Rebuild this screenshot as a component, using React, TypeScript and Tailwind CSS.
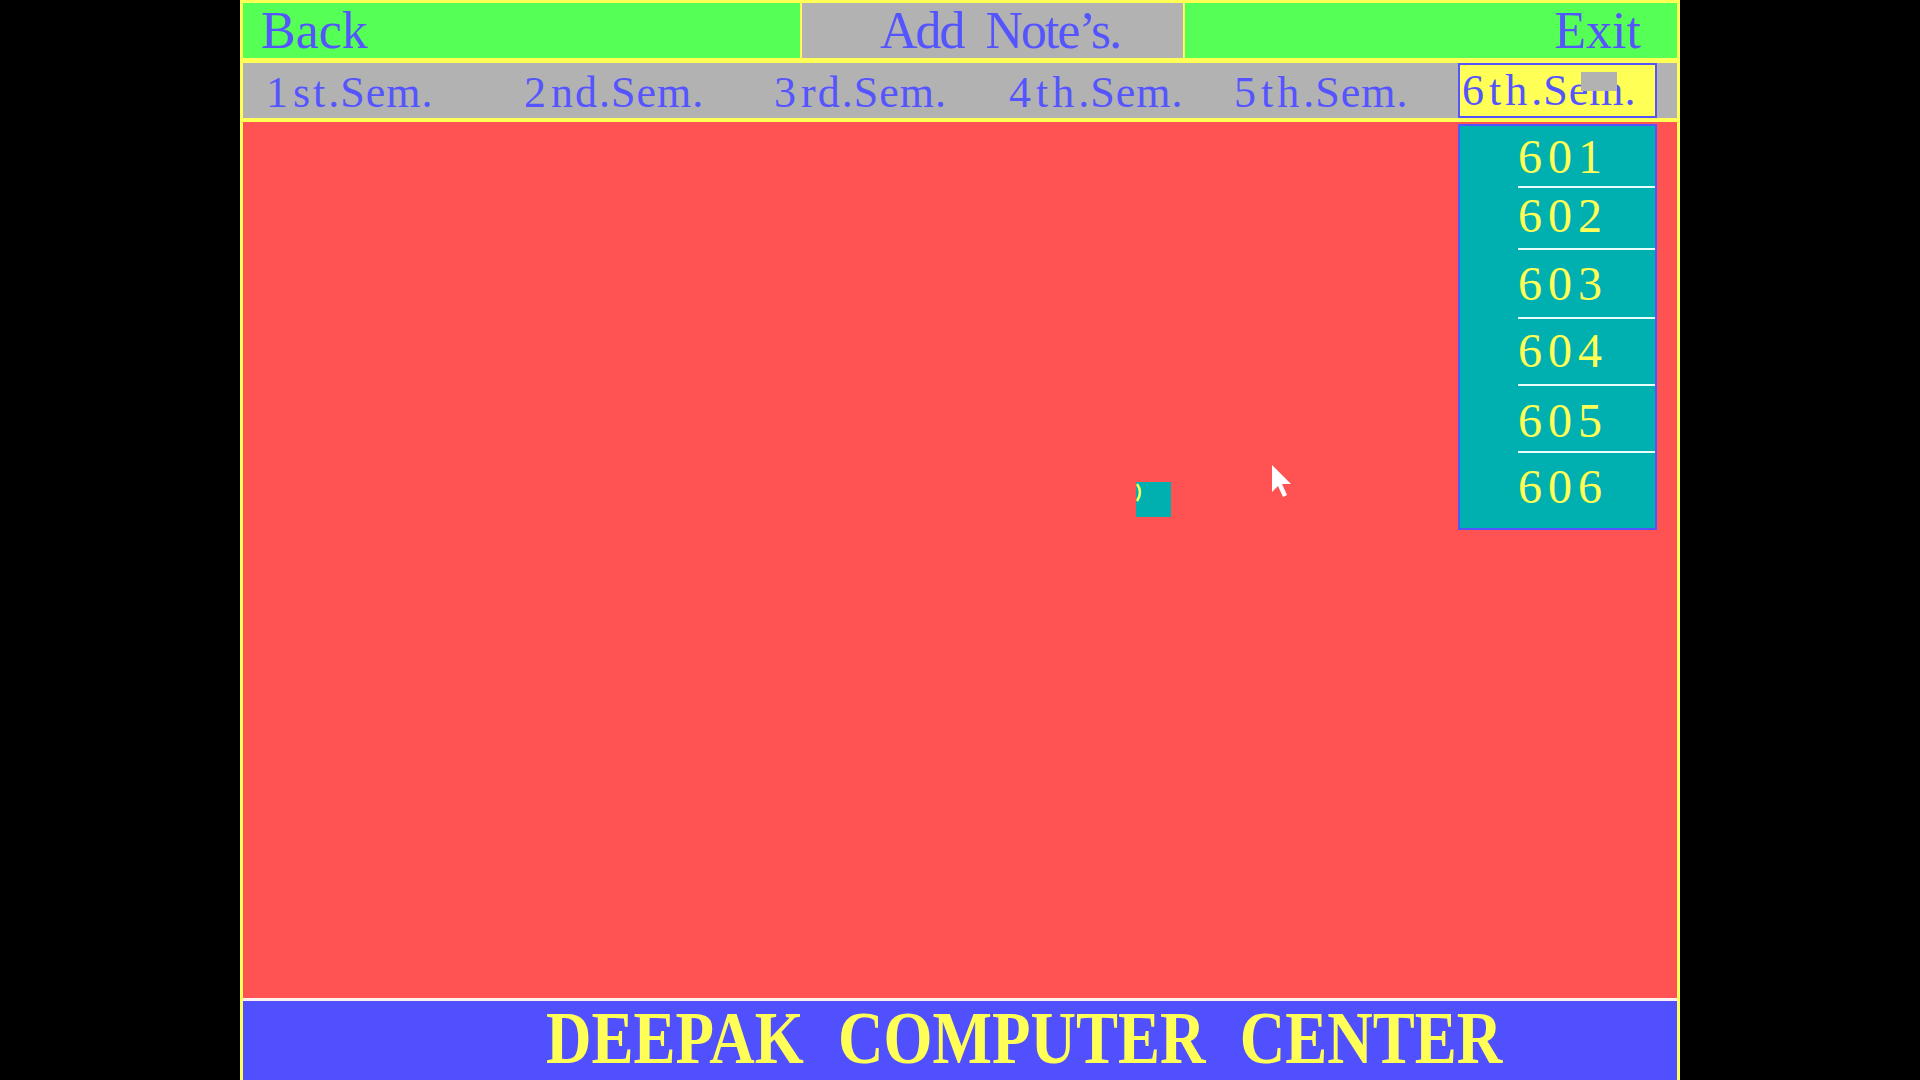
import React from "react";

const serif = { fontFamily: '"Liberation Serif", "Times New Roman", serif' };

const tabs = [
  { n: "1", a: "st", cls: "w-[258px]", acls: "tracking-[3px]" },
  { n: "2", a: "nd", cls: "w-[250px]", acls: "tracking-[2px]" },
  { n: "3", a: "rd", cls: "w-[235px]", acls: "tracking-[2px]" },
  { n: "4", a: "th", cls: "w-[225px]", acls: "tracking-[4px]" },
  { n: "5", a: "th", cls: "w-[224px]", acls: "tracking-[4px]" },
];

const items = [
  { label: "601", cls: "h-[62px] pt-[7px] border-b-2" },
  { label: "602", cls: "h-[62px] pt-[4px] border-b-2" },
  { label: "603", cls: "h-[69px] pt-[10px] border-b-2" },
  { label: "604", cls: "h-[67px] pt-[8px] border-b-2" },
  { label: "605", cls: "h-[67px] pt-[11px] border-b-2" },
  { label: "606", cls: "h-[75px] pt-[10px]" },
];

export default function App() {
  return (
    <div className="w-[1920px] h-[1080px] bg-black flex justify-center overflow-hidden" style={serif}>
      <div className="relative w-[1440px] h-[1080px] bg-[#ffff55] px-[3px] pt-[3px] flex flex-col">
        {/* top bar */}
        <div className="h-[55px] flex gap-[2px] text-[52px] leading-[55px] text-[#5555ff]">
          <div className="w-[557px] bg-[#55ff55] pl-[18px]">Back</div>
          <div className="w-[381px] bg-[#b2b2b2] pl-[78px] whitespace-pre tracking-[-2px]">
            Add{"  "}Note’s.
          </div>
          <div className="flex-1 bg-[#55ff55] pr-[36px] text-right">Exit</div>
        </div>
        {/* semester bar */}
        <div className="mt-[5px] h-[55px] bg-[#b2b2b2] flex text-[44px] leading-[55px] text-[#5555ff] pl-[23px]">
          {tabs.map((t) => (
            <div key={t.n} className={t.cls + " pt-[2px] whitespace-nowrap"}>
              <span className="mr-[5px]">{t.n}</span>
              <span className={t.acls}>{t.a}</span>
              <span className="tracking-[1px]">.Sem.</span>
            </div>
          ))}
          <div className="relative w-[199px] h-[55px] border-2 border-[#5555ff] bg-[#ffff55] pl-[2px] leading-[51px] whitespace-nowrap">
            <span className="mr-[5px]">6</span>
            <span className="tracking-[4px]">th</span>
            <span className="tracking-[1px]">.Sem.</span>
            <div className="absolute left-[121px] top-[7px] w-[36px] h-[19px] bg-[#b2b2b2]" />
          </div>
        </div>
        {/* red work area */}
        <div className="mt-[4px] flex-1 bg-[#ff5252]" />
        <div className="h-[3px] bg-[#fff0f0]" />
        {/* footer */}
        <div className="h-[79px] bg-[#5050ff] pl-[303px]">
          <div className="inline-block origin-left scale-x-[0.84] text-[75px] font-bold leading-[73px] text-[#ffff55] whitespace-nowrap [word-spacing:22px]">
            DEEPAK COMPUTER CENTER
          </div>
        </div>

        {/* dropdown */}
        <div className="absolute left-[1218px] top-[124px] w-[199px] h-[406px] border-2 border-[#5555ff] bg-[#00b0b0] flex flex-col">
          {items.map((it) => (
            <div
              key={it.label}
              className={it.cls + " ml-[58px] border-[#e8ffff] text-[48px] leading-[48px] tracking-[6px] text-[#ffff55]"}
            >
              {it.label}
            </div>
          ))}
        </div>

        {/* small teal square */}
        <div className="absolute left-[896px] top-[482px] w-[35px] h-[35px] bg-[#00b0b0]">
          <svg width="10" height="35" viewBox="0 0 10 35" className="absolute left-0 top-0">
            <path d="M1 2 Q7 10 1 19" stroke="#ffff55" strokeWidth="2.5" fill="none" />
          </svg>
        </div>

        {/* mouse cursor */}
        <svg
          width="21"
          height="34"
          viewBox="0 0 21 34"
          className="absolute left-[1032px] top-[465px]"
        >
          <path d="M0 0 L0 27 L6 21 L11 32 L15 30 L10 19 L19 19 Z" fill="#ffffff" />
        </svg>
      </div>
    </div>
  );
}
